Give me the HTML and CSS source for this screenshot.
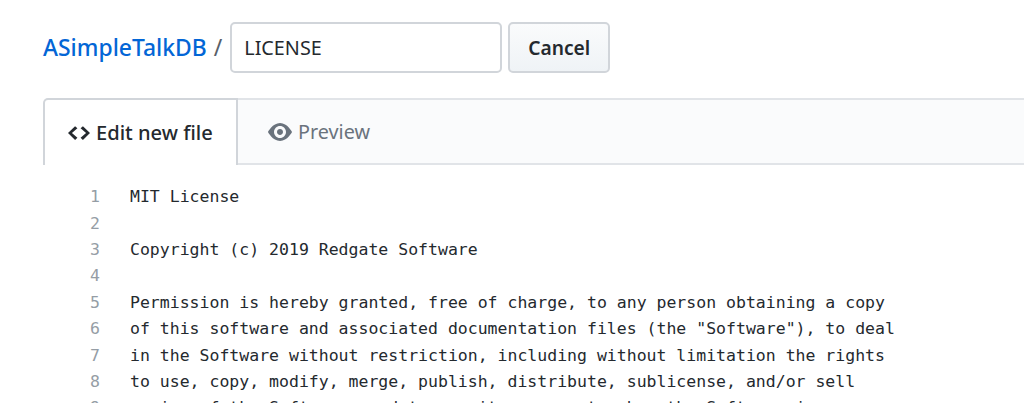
FILE: index.html
```html
<!DOCTYPE html>
<html lang="en">
<head>
<meta charset="utf-8">
<title>New file</title>
<link rel="stylesheet" href="styles.css">
</head>
<body>
<main class="page">
  <div class="breadcrumb">
    <a class="repo" href="#">ASimpleTalkDB</a>
    <span class="sep">/</span>
    <input class="filename" type="text" value="LICENSE" aria-label="File name">
    <button class="cancel" type="button">Cancel</button>
  </div>
  <section class="editor">
    <div class="tabs">
      <div class="tab active">
        <svg class="icon" width="22" height="22" viewBox="0 0 14 16" preserveAspectRatio="none"><path fill="currentColor" fill-rule="evenodd" d="M9.5 3L8 4.5 11.5 8 8 11.5 9.5 13 14 8 9.5 3zm-5 0L0 8l4.5 5L6 11.5 2.5 8 6 4.5 4.5 3z"/></svg>
        <span>Edit new file</span>
      </div>
      <div class="tab">
        <svg class="icon" width="24" height="24" viewBox="0 0 16 16"><path fill="currentColor" fill-rule="evenodd" d="M8.06 2C3 2 0 8 0 8s3 6 8.06 6C13 14 16 8 16 8s-3-6-7.94-6zM8 12c-2.2 0-4-1.78-4-4 0-2.2 1.8-4 4-4 2.22 0 4 1.8 4 4 0 2.22-1.78 4-4 4zm2-4c0 1.11-.89 2-2 2-1.11 0-2-.89-2-2 0-1.11.89-2 2-2 1.11 0 2 .89 2 2z"/></svg>
        <span>Preview</span>
      </div>
      <div class="tab-fill"></div>
    </div>
    <div class="code">
      <div class="line"><span class="num">1</span><span class="txt">MIT License</span></div>
      <div class="line"><span class="num">2</span><span class="txt"></span></div>
      <div class="line"><span class="num">3</span><span class="txt">Copyright (c) 2019 Redgate Software</span></div>
      <div class="line"><span class="num">4</span><span class="txt"></span></div>
      <div class="line"><span class="num">5</span><span class="txt">Permission is hereby granted, free of charge, to any person obtaining a copy</span></div>
      <div class="line"><span class="num">6</span><span class="txt">of this software and associated documentation files (the "Software"), to deal</span></div>
      <div class="line"><span class="num">7</span><span class="txt">in the Software without restriction, including without limitation the rights</span></div>
      <div class="line"><span class="num">8</span><span class="txt">to use, copy, modify, merge, publish, distribute, sublicense, and/or sell</span></div>
      <div class="line"><span class="num">9</span><span class="txt">copies of the Software, and to permit persons to whom the Software is</span></div>
    </div>
  </section>
</main>
</body>
</html>
```
FILE: styles.css
```css
html, body {
  margin: 0;
  height: 403px;
  overflow: hidden;
  background: #fff;
}
body {
  font-family: "Noto Sans", "Open Sans", sans-serif;
  color: #24292e;
}
.page {
  padding: 22px 0 0 43px;
}
.breadcrumb {
  display: flex;
  align-items: center;
  height: 51px;
  font-size: 22.9px;
}
.repo {
  color: #0366d6;
  font-weight: 500;
  text-decoration: none;
}
.sep {
  color: #586069;
  margin: 0 8px 0 7px;
}
.filename {
  box-sizing: border-box;
  width: 272px;
  height: 51px;
  padding: 0 12px;
  border: 2px solid #d1d5da;
  border-radius: 5px;
  background: #fff;
  color: #24292e;
  font: 400 19.8px "Noto Sans", sans-serif;
  outline: none;
}
.cancel {
  box-sizing: border-box;
  width: 102px;
  height: 51px;
  margin-left: 6px;
  border: 2px solid #d1d5da;
  border-radius: 5px;
  background: linear-gradient(#fafbfc, #eff3f6);
  color: #24292e;
  font: 600 19.2px "Noto Sans", sans-serif;
}
.editor {
  margin-top: 25px;
}
.tabs {
  display: flex;
  height: 67px;
}
.tab {
  box-sizing: border-box;
  display: flex;
  align-items: center;
  gap: 6px;
  width: 195px;
  padding-left: 30px;
  background: #fafbfc;
  color: #6a737d;
  font-size: 19.8px;
  border-top: 2px solid #e1e4e8;
  border-bottom: 2px solid #e1e4e8;
}
.tab.active {
  gap: 6px;
  width: 195px;
  padding-left: 23px;
  background: #fff;
  color: #24292e;
  font-size: 20.1px;
  font-weight: 500;
  border: 2px solid #d1d5da;
  border-bottom: 0;
  border-radius: 5px 0 0 0;
}
.tab-fill {
  flex: 1;
  background: #fafbfc;
  border-top: 2px solid #e1e4e8;
  border-bottom: 2px solid #e1e4e8;
}
.code {
  padding-top: 19.2px;
  font-family: "DejaVu Sans Mono", monospace;
  font-size: 16.5px;
  line-height: 26.4px;
  color: #24292e;
}
.line {
  display: flex;
  height: 26.4px;
}
.num {
  box-sizing: border-box;
  width: 57px;
  text-align: right;
  color: #959da5;
}
.txt {
  margin-left: 30px;
  white-space: pre;
}
```
